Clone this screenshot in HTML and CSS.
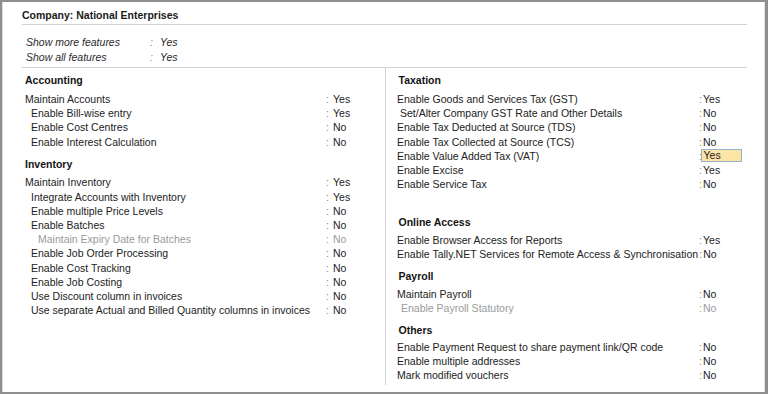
FILE: index.html
```html
<!DOCTYPE html>
<html>
<head>
<meta charset="utf-8">
<link rel="stylesheet" href="styles.css">
</head>
<body>
<div class="frame">
  <div class="content">
    <div class="header">Company: National Enterprises</div>
    <div class="features">
      <div class="feat"><span class="flabel">Show more features</span><span class="colon">:</span><span class="fval">Yes</span></div>
      <div class="feat"><span class="flabel">Show all features</span><span class="colon">:</span><span class="fval">Yes</span></div>
    </div>
    <div class="columns">
      <div class="col col-left">
        <div class="heading first">Accounting</div>
        <div class="row"><span class="label">Maintain Accounts</span><span class="colon">:</span><span class="val">Yes</span></div>
        <div class="row"><span class="label ind1">Enable Bill-wise entry</span><span class="colon">:</span><span class="val">Yes</span></div>
        <div class="row"><span class="label ind1">Enable Cost Centres</span><span class="colon">:</span><span class="val">No</span></div>
        <div class="row"><span class="label ind1">Enable Interest Calculation</span><span class="colon">:</span><span class="val">No</span></div>

        <div class="heading section">Inventory</div>
        <div class="row"><span class="label">Maintain Inventory</span><span class="colon">:</span><span class="val">Yes</span></div>
        <div class="row"><span class="label ind1">Integrate Accounts with Inventory</span><span class="colon">:</span><span class="val">Yes</span></div>
        <div class="row"><span class="label ind1">Enable multiple Price Levels</span><span class="colon">:</span><span class="val">No</span></div>
        <div class="row"><span class="label ind1">Enable Batches</span><span class="colon">:</span><span class="val">No</span></div>
        <div class="row disabled"><span class="label ind2">Maintain Expiry Date for Batches</span><span class="colon">:</span><span class="val">No</span></div>
        <div class="row"><span class="label ind1">Enable Job Order Processing</span><span class="colon">:</span><span class="val">No</span></div>
        <div class="row"><span class="label ind1">Enable Cost Tracking</span><span class="colon">:</span><span class="val">No</span></div>
        <div class="row"><span class="label ind1">Enable Job Costing</span><span class="colon">:</span><span class="val">No</span></div>
        <div class="row"><span class="label ind1">Use Discount column in invoices</span><span class="colon">:</span><span class="val">No</span></div>
        <div class="row"><span class="label ind1">Use separate Actual and Billed Quantity columns in invoices</span><span class="colon">:</span><span class="val">No</span></div>
      </div>
      <div class="col col-right">
        <div class="heading first">Taxation</div>
        <div class="row"><span class="label">Enable Goods and Services Tax (GST)</span><span class="colon">:</span><span class="val">Yes</span></div>
        <div class="row"><span class="label rind1">Set/Alter Company GST Rate and Other Details</span><span class="colon">:</span><span class="val">No</span></div>
        <div class="row"><span class="label">Enable Tax Deducted at Source (TDS)</span><span class="colon">:</span><span class="val">No</span></div>
        <div class="row"><span class="label">Enable Tax Collected at Source (TCS)</span><span class="colon">:</span><span class="val">No</span></div>
        <div class="row"><span class="label">Enable Value Added Tax (VAT)</span><span class="colon">:</span><span class="val"><span class="focus">Yes</span></span></div>
        <div class="row"><span class="label">Enable Excise</span><span class="colon">:</span><span class="val">Yes</span></div>
        <div class="row"><span class="label">Enable Service Tax</span><span class="colon">:</span><span class="val">No</span></div>

        <div class="heading section wide">Online Access</div>
        <div class="row"><span class="label">Enable Browser Access for Reports</span><span class="colon">:</span><span class="val">Yes</span></div>
        <div class="row long"><span class="label">Enable Tally.NET Services for Remote Access &amp; Synchronisation</span><span class="colon">:</span><span class="val">No</span></div>

        <div class="heading section tight">Payroll</div>
        <div class="row"><span class="label">Maintain Payroll</span><span class="colon">:</span><span class="val">No</span></div>
        <div class="row disabled"><span class="label rind2">Enable Payroll Statutory</span><span class="colon">:</span><span class="val">No</span></div>

        <div class="heading section tight short">Others</div>
        <div class="row"><span class="label">Enable Payment Request to share payment link/QR code</span><span class="colon">:</span><span class="val">No</span></div>
        <div class="row"><span class="label">Enable multiple addresses</span><span class="colon">:</span><span class="val">No</span></div>
        <div class="row"><span class="label">Mark modified vouchers</span><span class="colon">:</span><span class="val">No</span></div>
      </div>
    </div>
  </div>
</div>
</body>
</html>
```
FILE: styles.css
```css
* { box-sizing: border-box; }
html, body { margin: 0; padding: 0; }
body {
  width: 768px;
  height: 394px;
  background: #ffffff;
  font-family: "Liberation Sans", Arial, sans-serif;
  font-size: 10.5px;
  color: #222222;
  overflow: hidden;
}
.frame {
  width: 768px;
  height: 394px;
  border-top: 2px solid #8e8e8e;
  border-left: 2px solid #8e8e8e;
  border-right: 3px solid #8e8e8e;
  border-bottom: 2px solid #8e8e8e;
  box-shadow: inset 1px 0 0 #dcdcdc, inset -1px 0 0 #e4e4e4;
  display: flex;
  flex-direction: column;
}
.content {
  margin-left: 20px;
  width: 725px;
  flex: 1;
  display: flex;
  flex-direction: column;
}
.header {
  font-weight: bold;
  line-height: 14px;
  padding-top: 6px;
  padding-bottom: 2px;
  border-bottom: 1px solid #d2d2d2;
  color: #1a1a1a;
}
.features {
  padding: 10px 0 2px 4px;
  border-bottom: 1px solid #d2d2d2;
}
.feat {
  display: grid;
  grid-template-columns: 124px 10px auto;
  line-height: 15px;
  font-style: italic;
  color: #2a2a2a;
}
.colon { color: #8a8a8a; }
.columns {
  flex: 1;
  display: flex;
  margin-bottom: 7px;
}
.col {
  padding-top: 6px;
}
.col-left {
  width: 363px;
  padding-left: 3px;
}
.col-right {
  width: 362px;
  border-left: 1px solid #d2d2d2;
  padding-left: 11px;
}
.heading {
  font-weight: bold;
  line-height: 14.2px;
  margin-bottom: 3.8px;
  color: #141414;
}
.heading.first { margin-top: -1px; margin-bottom: 4.8px; }
.col-right .heading { padding-left: 1.5px; }
.heading.section { margin-top: 8.6px; }
.heading.wide { margin-top: 23.5px; }
.heading.tight { margin-top: 7.6px; }
.heading.short { margin-bottom: 2.6px; }
.row {
  display: grid;
  line-height: 14.2px;
  white-space: nowrap;
}
.col-left .row { grid-template-columns: 301px 7px auto; }
.col-right .row { grid-template-columns: 302px 4px auto; }
.col-right .row.long {
  display: flex;
}
.col-right .row.long .colon { margin-left: 1px; width: 4px; }
.ind1 { padding-left: 6px; }
.ind2 { padding-left: 13px; }
.rind1 { padding-left: 3px; }
.rind2 { padding-left: 4px; }
.disabled .label,
.disabled .colon,
.disabled .val { color: #9a9a9a; }
.focus {
  display: inline-block;
  width: 41px;
  height: 13px;
  line-height: 11px;
  margin-left: -2px;
  padding-left: 1.5px;
  background: #fce3a6;
  border: 1px solid #94b3c6;
  vertical-align: top;
  margin-top: 0.5px;
}
```
